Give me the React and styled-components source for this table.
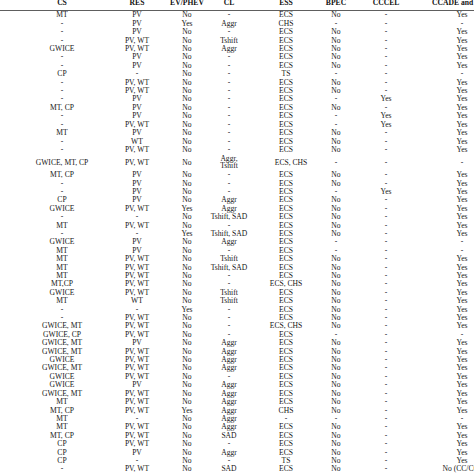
import React from 'react';
import styled, { createGlobalStyle } from 'styled-components';

const GlobalStyle = createGlobalStyle`
  html, body {
    margin: 0;
    padding: 0;
    background: #ffffff;
  }
`;

const COLUMNS = '84px 66px 34px 50px 64px 36px 64px 88px';

const Sheet = styled.div`
  width: 474px;
  height: 474px;
  overflow: hidden;
  background: #ffffff;
  font-family: 'Liberation Serif', 'Times New Roman', serif;
  color: #161616;
`;

const Table = styled.div`
  display: flex;
  flex-direction: column;
  margin-top: -4px;
  width: max-content;
`;

const Row = styled.div`
  display: grid;
  grid-template-columns: ${COLUMNS};
  padding-left: 20px;
  height: ${p => (p.$tall ? 16.82 : 8.41)}px;
`;

const HeadRow = styled(Row)`
  height: 14px;
  border-bottom: 1px solid #5e5e5e;
  font-weight: bold;
  color: #111111;
`;

const Cell = styled.div`
  display: flex;
  flex-direction: column;
  align-items: center;
  justify-content: center;
  white-space: nowrap;
  font-size: 7.6px;
  line-height: 7.6px;
  transform: translateX(${p => p.$nudge || 0}px);
`;

const headers = ['CS', 'RES', 'EV/PHEV', 'CL', 'ESS', 'BPEC', 'CCCEL', 'CCADE and DSM'];

const rows = [
  ['MT', 'PV', 'No', '-', 'ECS', 'No', '-', 'Yes'],
  ['-', 'PV', 'Yes', 'Aggr', 'CHS', '-', '-', '-'],
  ['-', 'PV', 'No', '-', 'ECS', 'No', '-', 'Yes'],
  ['-', 'PV, WT', 'No', 'Tshift', 'ECS', 'No', '-', 'Yes'],
  ['GWICE', 'PV, WT', 'No', 'Aggr', 'ECS', 'No', '-', 'Yes'],
  ['-', 'PV', 'No', '-', 'ECS', 'No', '-', 'Yes'],
  ['-', 'PV', 'No', '-', 'ECS', 'No', '-', 'Yes'],
  ['CP', '-', 'No', '-', 'TS', '-', '-', '-'],
  ['-', 'PV, WT', 'No', '-', 'ECS', 'No', '-', 'Yes'],
  ['-', 'PV, WT', 'No', '-', 'ECS', 'No', '-', 'Yes'],
  ['-', 'PV', 'No', '-', 'ECS', '-', 'Yes', 'Yes'],
  ['MT, CP', 'PV', 'No', '-', 'ECS', 'No', '-', 'Yes'],
  ['-', 'PV', 'No', '-', 'ECS', '-', 'Yes', 'Yes'],
  ['-', 'PV, WT', 'No', '-', 'ECS', '-', 'Yes', 'Yes'],
  ['MT', 'PV', 'No', '-', 'ECS', 'No', '-', 'Yes'],
  ['-', 'WT', 'No', '-', 'ECS', 'No', '-', 'Yes'],
  ['-', 'PV, WT', 'No', '-', 'ECS', 'No', '-', 'Yes'],
  ['GWICE, MT, CP', 'PV, WT', 'No', 'Aggr,\nTshift', 'ECS, CHS', '-', '-', '-'],
  ['MT, CP', 'PV', 'No', '-', 'ECS', 'No', '-', 'Yes'],
  ['-', 'PV', 'No', '-', 'ECS', 'No', '-', 'Yes'],
  ['-', 'PV', 'No', '-', 'ECS', '-', 'Yes', 'Yes'],
  ['CP', 'PV', 'No', 'Aggr', 'ECS', 'No', '-', 'Yes'],
  ['GWICE', 'PV, WT', 'Yes', 'Aggr', 'ECS', 'No', '-', 'Yes'],
  ['-', '-', 'No', 'Tshift, SAD', 'ECS', 'No', '-', 'Yes'],
  ['MT', 'PV, WT', 'No', '-', 'ECS', 'No', '-', 'Yes'],
  ['-', '-', 'Yes', 'Tshift, SAD', 'ECS', 'No', '-', 'Yes'],
  ['GWICE', 'PV', 'No', 'Aggr', 'ECS', '-', '-', '-'],
  ['MT', 'PV', 'No', '-', 'ECS', '-', '-', '-'],
  ['MT', 'PV, WT', 'No', 'Tshift', 'ECS', 'No', '-', 'Yes'],
  ['MT', 'PV, WT', 'No', 'Tshift, SAD', 'ECS', 'No', '-', 'Yes'],
  ['MT', 'PV, WT', 'No', '-', 'ECS', 'No', '-', 'Yes'],
  ['MT,CP', 'PV, WT', 'No', '-', 'ECS, CHS', 'No', '-', 'Yes'],
  ['GWICE', 'PV, WT', 'No', 'Tshift', 'ECS', 'No', '-', 'Yes'],
  ['MT', 'WT', 'No', 'Tshift', 'ECS', 'No', '-', 'Yes'],
  ['-', '-', 'Yes', '-', 'ECS', 'No', '-', 'Yes'],
  ['-', 'PV, WT', 'No', '-', 'ECS', 'No', '-', 'Yes'],
  ['GWICE, MT', 'PV, WT', 'No', '-', 'ECS, CHS', 'No', '-', 'Yes'],
  ['GWICE, CP', 'PV, WT', 'No', '-', 'ECS', '-', '-', '-'],
  ['GWICE, MT', 'PV', 'No', 'Aggr', 'ECS', 'No', '-', 'Yes'],
  ['GWICE, MT', 'PV, WT', 'No', 'Aggr', 'ECS', 'No', '-', 'Yes'],
  ['GWICE', 'PV, WT', 'No', 'Aggr', 'ECS', 'No', '-', 'Yes'],
  ['GWICE, MT', 'PV, WT', 'No', 'Aggr', 'ECS', 'No', '-', 'Yes'],
  ['GWICE', 'PV, WT', 'No', '-', 'ECS', 'No', '-', 'Yes'],
  ['GWICE', 'PV', 'No', 'Aggr', 'ECS', 'No', '-', 'Yes'],
  ['GWICE, MT', 'PV, WT', 'No', 'Aggr', 'ECS', 'No', '-', 'Yes'],
  ['MT', 'PV, WT', 'No', 'Aggr', 'ECS', 'No', '-', 'Yes'],
  ['MT, CP', 'PV, WT', 'Yes', 'Aggr', 'CHS', 'No', '-', 'Yes'],
  ['MT', '-', 'No', 'Aggr', '-', '-', '-', '-'],
  ['MT', 'PV, WT', 'No', 'Aggr', 'ECS', 'No', '-', 'Yes'],
  ['MT, CP', 'PV, WT', 'No', 'SAD', 'ECS', 'No', '-', 'Yes'],
  ['CP', 'PV, WT', 'No', '-', 'ECS', 'No', '-', 'Yes'],
  ['CP', 'PV', 'No', 'Aggr', 'ECS', 'No', '-', 'Yes'],
  ['CP', '-', 'No', '-', 'TS', 'No', '-', 'Yes'],
  ['-', 'PV, WT', 'No', 'SAD', 'ECS', 'No', '-', 'No (CC/CO)'],
];

function CellText({ text }) {
  return text.split('\n').map((line, i) => <span key={i}>{line}</span>);
}

export default function App() {
  return (
    <Sheet>
      <GlobalStyle />
      <Table>
        <HeadRow>
          {headers.map(h => (
            <Cell key={h}>{h}</Cell>
          ))}
        </HeadRow>
        {rows.map((row, r) => {
          const tall = row.some(c => c.includes('\n'));
          return (
            <Row key={r} $tall={tall}>
              {row.map((c, i) => (
                <Cell key={i} $nudge={tall && i === 4 ? 5 : 0}>
                  <CellText text={c} />
                </Cell>
              ))}
            </Row>
          );
        })}
      </Table>
    </Sheet>
  );
}
